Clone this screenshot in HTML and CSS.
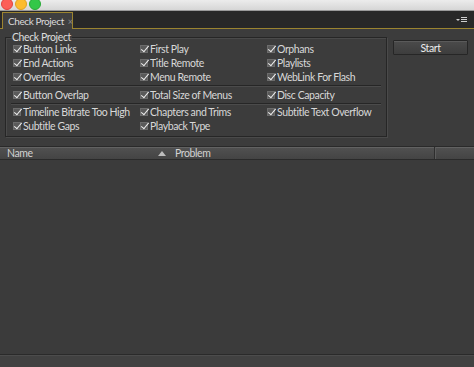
FILE: index.html
```html
<!DOCTYPE html>
<html lang="en">
<head>
    <meta charset="UTF-8">
    <title>Check Project</title>
    <link rel="stylesheet" href="styles.css">
</head>
<body>
    <div class="titlebar">
        <span class="light red"></span>
        <span class="light yellow"></span>
        <span class="light green"></span>
    </div>

    <div class="tabbar">
        <div class="tab">Check Project<span class="tab-close">×</span></div>
        <div class="tab-menu">
            <svg width="12" height="8" viewBox="0 0 12 8">
                <path d="M0 3 L4 3 L2 5 Z" fill="#cfcfcf"/>
                <rect x="5" y="1" width="6" height="1" fill="#cfcfcf"/>
                <rect x="5" y="3" width="6" height="1" fill="#cfcfcf"/>
                <rect x="5" y="5" width="6" height="1" fill="#cfcfcf"/>
            </svg>
        </div>
    </div>

    <div class="panel">
        <div class="options">
            <fieldset class="group">
                <legend>Check Project</legend>

                <div class="check-grid">
                    <label class="check"><span class="box"></span>Button Links</label>
                    <label class="check"><span class="box"></span>First Play</label>
                    <label class="check"><span class="box"></span>Orphans</label>
                    <label class="check"><span class="box"></span>End Actions</label>
                    <label class="check"><span class="box"></span>Title Remote</label>
                    <label class="check"><span class="box"></span>Playlists</label>
                    <label class="check"><span class="box"></span>Overrides</label>
                    <label class="check"><span class="box"></span>Menu Remote</label>
                    <label class="check"><span class="box"></span>WebLink For Flash</label>
                </div>

                <div class="separator"></div>

                <div class="check-grid">
                    <label class="check"><span class="box"></span>Button Overlap</label>
                    <label class="check"><span class="box"></span>Total Size of Menus</label>
                    <label class="check"><span class="box"></span>Disc Capacity</label>
                </div>

                <div class="separator tight"></div>

                <div class="check-grid">
                    <label class="check"><span class="box"></span>Timeline Bitrate Too High</label>
                    <label class="check"><span class="box"></span>Chapters and Trims</label>
                    <label class="check"><span class="box"></span>Subtitle Text Overflow</label>
                    <label class="check"><span class="box"></span>Subtitle Gaps</label>
                    <label class="check"><span class="box"></span>Playback Type</label>
                </div>
            </fieldset>

            <div class="actions">
                <button class="start-button">Start</button>
            </div>
        </div>

        <div class="results">
            <div class="results-header">
                <div class="col col-name">Name</div>
                <div class="col col-sort">
                    <svg width="8" height="5" viewBox="0 0 8 5"><path d="M0 5 L4 0 L8 5 Z" fill="#bdbdbd"/></svg>
                </div>
                <div class="col col-problem">Problem</div>
                <div class="col col-end"></div>
            </div>
            <div class="results-body"></div>
        </div>

        <div class="statusbar"></div>
    </div>
</body>
</html>
```

FILE: styles.css
```css
* {
    margin: 0;
    padding: 0;
    box-sizing: border-box;
}

body {
    font-family: Lato, 'Open Sans', sans-serif;
    font-size: 10px;
    letter-spacing: -0.4px;
    color: #d6d6d6;
    background: #3c3c3c;
    width: 474px;
    height: 367px;
    overflow: hidden;
    display: flex;
    flex-direction: column;
}

/* window chrome */
.titlebar {
    height: 11px;
    background: linear-gradient(#ececec, #d6d6d6);
    border-bottom: 1px solid #9a9a9a;
    display: flex;
    gap: 2px;
    padding-left: 1px;
    align-items: flex-end;
    overflow: hidden;
}

.light {
    width: 12px;
    height: 12px;
    border-radius: 50%;
}

.light.red { background: #fc5f57; border: 1px solid #e0443e; }
.light.yellow { background: #fdbc2e; border: 1px solid #dea123; }
.light.green { background: #33c748; border: 1px solid #27aa35; }

/* panel tabs */
.tabbar {
    height: 18px;
    background: #282828;
    border-bottom: 1px solid #9b8430;
    display: flex;
    align-items: flex-end;
    padding-left: 2px;
}

.tab {
    height: 17px;
    width: 71px;
    margin-bottom: -1px;
    background: #3f3f3f;
    border: 1px solid #9b8430;
    border-bottom: none;
    padding: 2px 0 0 5px;
    color: #dcdcdc;
    font-size: 10px;
    letter-spacing: -0.4px;
    white-space: nowrap;
    overflow: hidden;
}

.tab-close {
    color: #8a8a8a;
    font-size: 9px;
    margin-left: 4px;
}

.tab-menu {
    margin-left: auto;
    margin-right: 6px;
    align-self: center;
    display: flex;
}

/* main area */
.panel {
    flex: 1;
    display: flex;
    flex-direction: column;
}

.options {
    display: flex;
    padding: 3px 6px 0 5px;
}

.group {
    width: 383px;
    border: 1px solid #262626;
    box-shadow: inset 1px 1px 0 #4a4a4a, 1px 1px 0 #4a4a4a;
    padding: 0 0 3px 7px;
}

.group legend {
    padding: 0 1px;
    margin-left: -2px;
    color: #dcdcdc;
    font-size: 10.5px;
    line-height: 10px;
}

.check-grid {
    display: grid;
    grid-template-columns: 127px 127px 1fr;
}

.check {
    height: 14px;
    display: flex;
    align-items: center;
    gap: 2px;
    white-space: nowrap;
    color: #d8d8d8;
    font-size: 10.5px;
}

.box {
    width: 8px;
    height: 8px;
    background: #5a5a5a;
    border: 1px solid #6c6c6c;
    position: relative;
    flex-shrink: 0;
}

.box::after {
    content: "";
    position: absolute;
    left: 2px;
    top: -2px;
    width: 3px;
    height: 7px;
    border: solid #f0f0f0;
    border-width: 0 1.5px 1.5px 0;
    transform: rotate(40deg);
}

.separator {
    height: 2px;
    margin: 1px 5px 1px -2px;
    border-top: 1px solid #262626;
    border-bottom: 1px solid #4b4b4b;
}

.separator.tight {
    margin-bottom: 0;
}

.actions {
    padding: 8px 0 0 6px;
}

.start-button {
    width: 75px;
    height: 15px;
    font-family: inherit;
    font-size: 10.5px;
    letter-spacing: inherit;
    color: #ececec;
    background: linear-gradient(#4b4b4b, #3d3d3d);
    border: 1px solid #262626;
    border-radius: 1px;
    box-shadow: inset 0 1px 0 #5a5a5a;
}

/* results table */
.results {
    flex: 1;
    display: flex;
    flex-direction: column;
    margin-top: 9px;
}

.results-header {
    height: 14px;
    display: flex;
    align-items: center;
    background: linear-gradient(#515151, #444444);
    border-top: 1px solid #2a2a2a;
    border-bottom: 1px solid #2a2a2a;
    box-shadow: inset 0 1px 0 #626262;
    color: #d2d2d2;
    font-size: 10.5px;
}

.col-name {
    width: 158px;
    padding-left: 7px;
}

.col-sort {
    width: 12px;
    display: flex;
    align-items: center;
}

.col-problem {
    width: 264px;
    padding-left: 5px;
}

.col-end {
    flex: 1;
    height: 100%;
    border-left: 1px solid #2e2e2e;
    box-shadow: inset 1px 0 0 #5c5c5c;
}

.results-body {
    flex: 1;
    background: #3b3b3b;
}

.statusbar {
    height: 13px;
    background: #414141;
    border-top: 1px solid #2a2a2a;
    box-shadow: inset 0 1px 0 #4c4c4c;
}
```
